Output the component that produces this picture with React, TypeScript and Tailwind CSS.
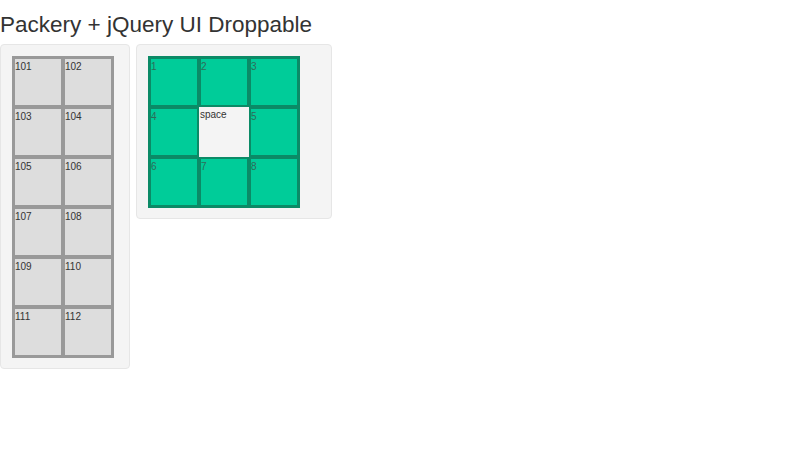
const leftItems = ["101", "102", "103", "104", "105", "106", "107", "108", "109", "110", "111", "112"]

const rightItems = ["1", "2", "3", "4", "space", "5", "6", "7", "8"]

export default function App() {
  return (
    <div className="min-h-[450px] bg-white font-['Liberation_Sans',Arial,sans-serif] text-[#333]">
      <h1 className="h-[44px] text-[22.5px] font-normal leading-[50px]">
        Packery + jQuery UI Droppable
      </h1>
      <div className="flex items-start gap-[6px]">
        <div className="w-[130px] rounded-[4px] border border-[#e6e6e6] bg-[#f4f4f4] px-[11px] pt-[11px] pb-[10px]">
          <div className="grid w-[102px] grid-cols-2 border border-[#999]">
            {leftItems.map((n) => (
              <div
                key={n}
                className="h-[50px] w-[50px] border-2 border-[#999] bg-[#ddd] text-[10px] leading-[15px]"
              >
                {n}
              </div>
            ))}
          </div>
        </div>
        <div className="w-[196px] rounded-[4px] border border-[#e6e6e6] bg-[#f4f4f4] px-[11px] pt-[11px] pb-[10px]">
          <div className="grid w-[152px] grid-cols-3 border border-[#0b8a66] bg-[#0b8a66]">
            {rightItems.map((n) =>
              n === "space" ? (
                <div key={n} className="h-[50px] w-[50px] bg-[#f4f4f4] pl-px text-[10px] leading-[15px]">
                  space
                </div>
              ) : (
                <div
                  key={n}
                  className="h-[50px] w-[50px] border-2 border-[#0b8a66] bg-[#00cc99] text-[10px] leading-[15px] text-[#2f6a58]"
                >
                  {n}
                </div>
              )
            )}
          </div>
        </div>
      </div>
    </div>
  )
}
